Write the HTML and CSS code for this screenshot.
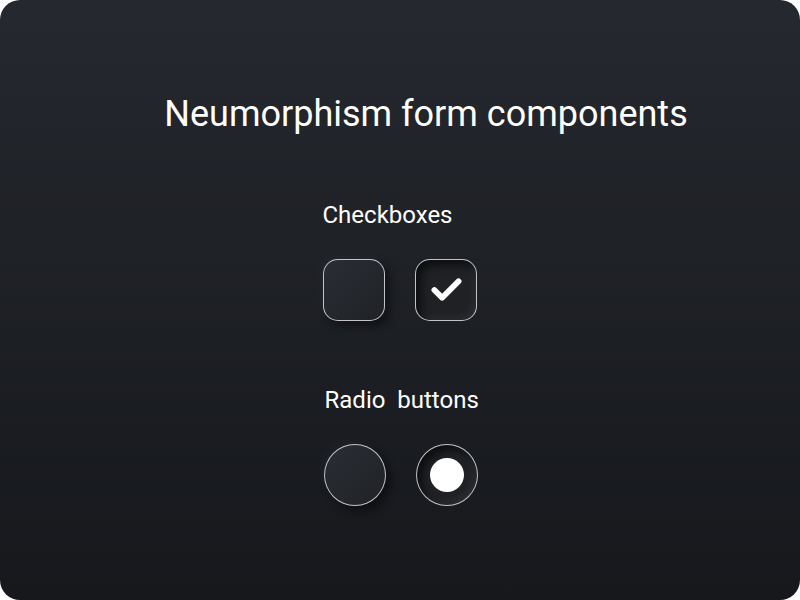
FILE: index.html
```html
<!DOCTYPE html>
<html lang="en">
<head>
    <meta charset="UTF-8">
    <meta name="viewport" content="width=device-width, initial-scale=1.0">
    <title>Neumorphism form components</title>
    <link rel="stylesheet" href="styles.css">
</head>
<body>
    <div class="panel">
        <h1>Neumorphism form components</h1>

        <div class="group">
            <h2>Checkboxes</h2>
            <div class="controls">
                <label class="checkbox">
                    <input type="checkbox">
                    <span class="box"></span>
                </label>
                <label class="checkbox">
                    <input type="checkbox" checked>
                    <span class="box">
                        <svg viewBox="0 0 62 62" width="62" height="62">
                            <path d="M19 31 L27 39 L44 22" fill="none" stroke="#fff" stroke-width="6" stroke-linecap="round" stroke-linejoin="round"/>
                        </svg>
                    </span>
                </label>
            </div>
        </div>

        <div class="group radios">
            <h2>Radio&nbsp; buttons</h2>
            <div class="controls">
                <label class="radio">
                    <input type="radio" name="demo">
                    <span class="dot"></span>
                </label>
                <label class="radio">
                    <input type="radio" name="demo" checked>
                    <span class="dot"></span>
                </label>
            </div>
        </div>
    </div>
</body>
</html>
```

FILE: styles.css
```css
html, body {
    margin: 0;
    background: #fff;
}

body {
    font-family: Roboto, 'Liberation Sans', sans-serif;
    color: #fff;
}

.panel {
    width: 800px;
    height: 600px;
    box-sizing: border-box;
    padding-top: 93px;
    border-radius: 20px;
    background: linear-gradient(to bottom, #25282e, #16181c);
    display: flex;
    flex-direction: column;
    align-items: center;
}

h1 {
    margin: 0 0 66px 52px;
    font-size: 36px;
    line-height: 42px;
    font-weight: 400;
}

.group {
    display: flex;
    flex-direction: column;
    align-items: flex-start;
    width: 155px;
    margin-bottom: 65px;
}

h2 {
    margin: 0 0 30px;
    font-size: 24px;
    line-height: 28px;
    font-weight: 400;
    white-space: nowrap;
}

.radios h2 {
    margin-left: 2px;
}

.controls {
    display: flex;
    gap: 30px;
}

.radios .controls {
    margin-left: 1px;
}

input {
    display: none;
}

.checkbox .box,
.radio .dot {
    display: flex;
    align-items: center;
    justify-content: center;
    width: 62px;
    height: 62px;
    box-sizing: border-box;
    border: 1px solid rgba(235, 235, 240, 0.8);
    background: linear-gradient(135deg, #2a2d33, #202227);
    box-shadow: 5px 5px 10px rgba(0, 0, 0, 0.45), -3px -3px 8px rgba(255, 255, 255, 0.03);
}

.checkbox .box {
    border-radius: 15px;
}

.radio .dot {
    border-radius: 50%;
}

.checkbox input:checked + .box,
.radio input:checked + .dot {
    background: #1f2125;
    box-shadow: inset 5px 5px 9px rgba(0, 0, 0, 0.6), inset -3px -3px 7px rgba(255, 255, 255, 0.06);
}

.radio input:checked + .dot::after {
    content: '';
    width: 34px;
    height: 34px;
    border-radius: 50%;
    background: #fff;
}
```
